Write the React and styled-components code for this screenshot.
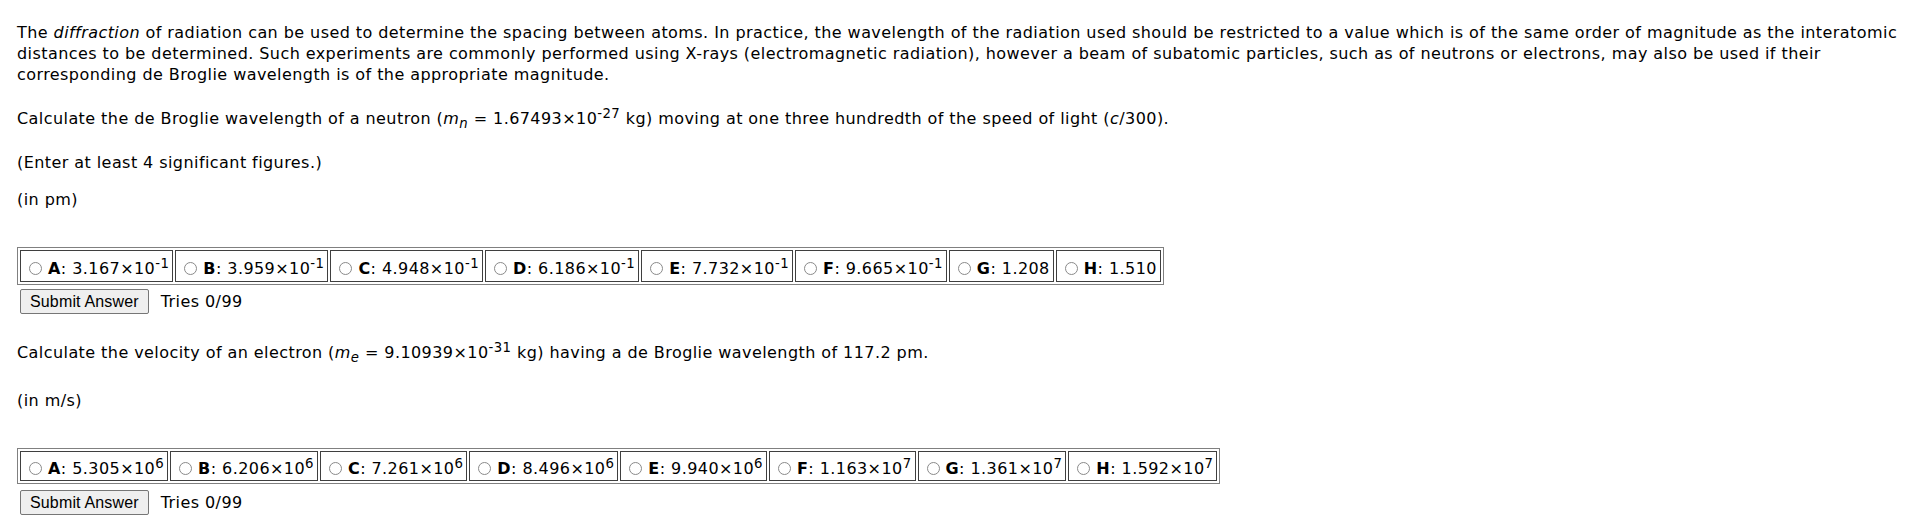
import React from "react";
import styled, { createGlobalStyle } from "styled-components";

const GlobalStyle = createGlobalStyle`
  html, body { margin: 0; padding: 0; background: #fff; }
  body {
    font-family: "DejaVu Sans", Verdana, sans-serif;
    font-size: 16px;
    letter-spacing: 0.43px;
    color: #000;
  }
`;

const Page = styled.div`
  padding: 22px 17px 0 17px;
`;

const Para = styled.p`
  margin: ${(p) => p.$top || 0}px 0 0 0;
  line-height: 21px;
`;

const Sup = styled.sup`
  font-size: 0.83em;
  line-height: 0;
  vertical-align: super;
`;

const Sub = styled.sub`
  font-size: 0.83em;
  line-height: 0;
  vertical-align: sub;
  font-style: italic;
`;

const Table = styled.table`
  margin-top: ${(p) => p.$top}px;
  border: 1px solid #808080;
  border-collapse: separate;
  border-spacing: 2px;
`;

const Cell = styled.td`
  border: 1px solid #3f3f3f;
  padding: ${(p) => (p.$compact ? "6px 3px 1px 0" : "7px 3px 2px 0")};
  line-height: 21px;
  white-space: nowrap;
  vertical-align: top;
`;

const Radio = styled.input.attrs({ type: "radio" })`
  appearance: none;
  -webkit-appearance: none;
  box-sizing: border-box;
  width: 13px;
  height: 13px;
  margin: 0 6px 0 8px;
  border: 1px solid #8a8a8a;
  border-radius: 50%;
  background: #fff;
  vertical-align: -1px;
`;

const Letter = styled.b`
  font-weight: bold;
`;

const SubmitRow = styled.div`
  display: flex;
  align-items: center;
  margin-top: ${(p) => p.$top}px;
  padding-left: 3px;
`;

const SubmitButton = styled.button`
  box-sizing: border-box;
  height: 25px;
  padding: 0 9px;
  font-family: "Liberation Sans", Arial, sans-serif;
  font-size: 16px;
  letter-spacing: 0.15px;
  color: #000;
  background: #efefef;
  border: 1px solid #767676;
  border-radius: 2px;
`;

const Tries = styled.span`
  margin-left: 12px;
  line-height: 21px;
`;

const q1 = [
  ["A", "3.167×10", "-1"],
  ["B", "3.959×10", "-1"],
  ["C", "4.948×10", "-1"],
  ["D", "6.186×10", "-1"],
  ["E", "7.732×10", "-1"],
  ["F", "9.665×10", "-1"],
  ["G", "1.208", null],
  ["H", "1.510", null],
];

const q2 = [
  ["A", "5.305×10", "6"],
  ["B", "6.206×10", "6"],
  ["C", "7.261×10", "6"],
  ["D", "8.496×10", "6"],
  ["E", "9.940×10", "6"],
  ["F", "1.163×10", "7"],
  ["G", "1.361×10", "7"],
  ["H", "1.592×10", "7"],
];

function Choices({ items, name, top, compact }) {
  return (
    <Table $top={top}>
      <tbody>
        <tr>
          {items.map(([l, v, e]) => (
            <Cell key={l} $compact={compact}>
              <label>
                <Radio name={name} />
                <Letter>{l}</Letter>: {v}
                {e && <Sup>{e}</Sup>}
              </label>
            </Cell>
          ))}
        </tr>
      </tbody>
    </Table>
  );
}

export default function App() {
  return (
    <Page>
      <GlobalStyle />
      <Para>
        The <i>diffraction</i> of radiation can be used to determine the spacing between atoms. In
        practice, the wavelength of the radiation used should be restricted to a value which is of
        the same order of magnitude as the interatomic distances to be determined. Such experiments
        are commonly performed using X-rays (electromagnetic radiation), however a beam of subatomic
        particles, such as of neutrons or electrons, may also be used if their corresponding de
        Broglie wavelength is of the appropriate magnitude.
      </Para>
      <Para $top={23}>
        Calculate the de Broglie wavelength of a neutron (<i>m</i>
        <Sub>n</Sub> = 1.67493×10<Sup>-27</Sup> kg) moving at one three hundredth of the speed of
        light (<i>c</i>/300).
      </Para>
      <Para $top={23}>(Enter at least 4 significant figures.)</Para>
      <Para $top={16}>(in pm)</Para>
      <Choices items={q1} name="q1" top={37} />
      <SubmitRow $top={4}>
        <SubmitButton type="button">Submit Answer</SubmitButton>
        <Tries>Tries 0/99</Tries>
      </SubmitRow>
      <Para $top={28}>
        Calculate the velocity of an electron (<i>m</i>
        <Sub>e</Sub> = 9.10939×10<Sup>-31</Sup> kg) having a de Broglie wavelength of 117.2 pm.
      </Para>
      <Para $top={27}>(in m/s)</Para>
      <Choices items={q2} name="q2" top={37} compact />
      <SubmitRow $top={6}>
        <SubmitButton type="button">Submit Answer</SubmitButton>
        <Tries>Tries 0/99</Tries>
      </SubmitRow>
    </Page>
  );
}
